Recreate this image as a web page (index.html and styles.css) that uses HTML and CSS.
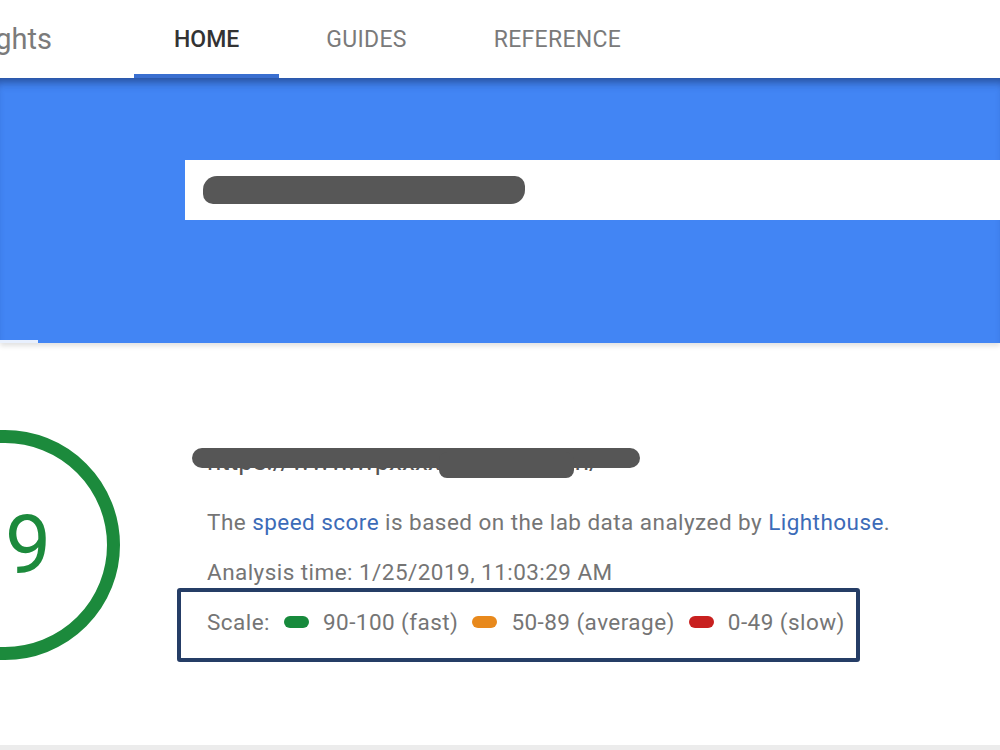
FILE: index.html
```html
<!DOCTYPE html>
<html lang="en">
<head>
<meta charset="utf-8">
<title>PageSpeed Insights</title>
<link rel="stylesheet" href="styles.css">
</head>
<body>
<header class="topbar">
  <div class="brand"><span>PageSpeed Insights</span></div>
  <nav class="tabs">
    <a class="tab active">HOME</a>
    <a class="tab">GUIDES</a>
    <a class="tab">REFERENCE</a>
  </nav>
</header>
<section class="hero">
  <div class="field"><span class="redact"></span></div>
  <div class="modes"><span class="mode-indicator"></span></div>
</section>
<main class="report">
  <div class="gauge"><span class="score">99</span></div>
  <div class="summary">
    <div class="url"><span class="url-text">https://www.wpxxxxxxxxxxx.com/</span><span class="blob blob-a"></span><span class="blob blob-b"></span></div>
    <p class="line">The <a class="link">speed score</a> is based on the lab data analyzed by <a class="link">Lighthouse</a>.</p>
    <p class="line">Analysis time: 1/25/2019, 11:03:29 AM</p>
    <div class="scale">
      <span>Scale:</span>
      <span class="pill fast"></span><span>90-100 (fast)</span>
      <span class="pill average"></span><span>50-89 (average)</span>
      <span class="pill slow"></span><span>0-49 (slow)</span>
    </div>
  </div>
</main>
<div class="bottom-rule"></div>
</body>
</html>
```
FILE: styles.css
```css
* { box-sizing: border-box; }
html, body { margin: 0; padding: 0; }
body {
  width: 1000px;
  height: 750px;
  overflow: hidden;
  background: #fff;
  font-family: Roboto, "Liberation Sans", sans-serif;
  color: #757575;
  display: flex;
  flex-direction: column;
}

.topbar {
  height: 78px;
  display: flex;
  align-items: stretch;
  background: #fff;
  position: relative;
  z-index: 2;
}
.brand {
  width: 52px;
  display: flex;
  justify-content: flex-end;
  align-items: center;
  overflow: hidden;
  white-space: nowrap;
  font-size: 29px;
  color: #7b7b7b;
  flex-shrink: 0;
}
.tabs {
  display: flex;
  margin-left: 82px;
  gap: 7px;
}
.tab {
  display: flex;
  align-items: center;
  padding: 0 40px;
  font-size: 23px;
  font-weight: 400;
  letter-spacing: 0.3px;
  color: #7a7a7a;
  border-bottom: 4px solid transparent;
  padding-top: 4px;
}
.tab.active {
  color: #333;
  font-weight: 500;
  letter-spacing: 0;
  border-bottom-color: #3a6fd0;
}

.hero {
  height: 265px;
  background: #4285f4;
  display: flex;
  flex-direction: column;
  padding-top: 82px;
  box-shadow: inset 0 10px 10px -6px rgba(20, 40, 90, 0.6), 0 3px 5px rgba(0, 0, 0, 0.12);
  position: relative;
  z-index: 1;
}
.field {
  height: 60px;
  margin-left: 185px;
  background: #fff;
  display: flex;
  align-items: center;
  padding-left: 18px;
}
.redact {
  width: 322px;
  height: 28px;
  background: #575757;
  border-radius: 14px 10px 14px 10px;
}
.modes {
  flex: 1;
  display: flex;
  align-items: flex-end;
}
.mode-indicator {
  width: 38px;
  height: 3px;
  background: #e8f0fe;
}

.report {
  flex: 1;
  display: flex;
  align-items: flex-start;
}
.gauge {
  width: 230px;
  height: 230px;
  margin-top: 87px;
  margin-left: -110px;
  border: 13px solid #1c8a3c;
  border-radius: 50%;
  display: flex;
  align-items: center;
  justify-content: center;
  flex-shrink: 0;
}
.score {
  font-size: 82px;
  font-weight: 400;
  color: #1c8a3c;
  line-height: 1;
}
.summary {
  margin-left: 57px;
  padding-top: 103px;
  display: flex;
  flex-direction: column;
}
.url {
  position: relative;
  padding-left: 30px;
  height: 30px;
  font-size: 26px;
  line-height: 30px;
  color: #555;
  white-space: nowrap;
}
.url-text { display: inline-block; }
.blob {
  position: absolute;
  background: #565656;
  border-radius: 12px;
}
.blob-a { left: 15px; top: 2px; width: 448px; height: 20px; }
.blob-b { left: 262px; top: 6px; width: 135px; height: 26px; border-radius: 8px; }
.line {
  margin: 0;
  padding-left: 30px;
  font-size: 22.5px;
  letter-spacing: 0.45px;
  line-height: 30px;
  white-space: nowrap;
}
.url + .line { margin-top: 31px; }
.line + .line { margin-top: 20px; }
.link { color: #3c6bb8; }
.scale {
  margin-top: 1px;
  width: 683px;
  height: 74px;
  border: 4px solid #253d66;
  border-radius: 3px;
  display: flex;
  align-items: center;
  gap: 14px;
  padding-left: 26px;
  padding-bottom: 7px;
  font-size: 22.5px;
  letter-spacing: 0.45px;
  white-space: nowrap;
}
.pill {
  width: 25px;
  height: 12px;
  border-radius: 6px;
}
.pill.fast { background: #178a3c; }
.pill.average { background: #e8891c; }
.pill.slow { background: #c8201f; }

.bottom-rule {
  height: 5px;
  background: #ececec;
}
```
